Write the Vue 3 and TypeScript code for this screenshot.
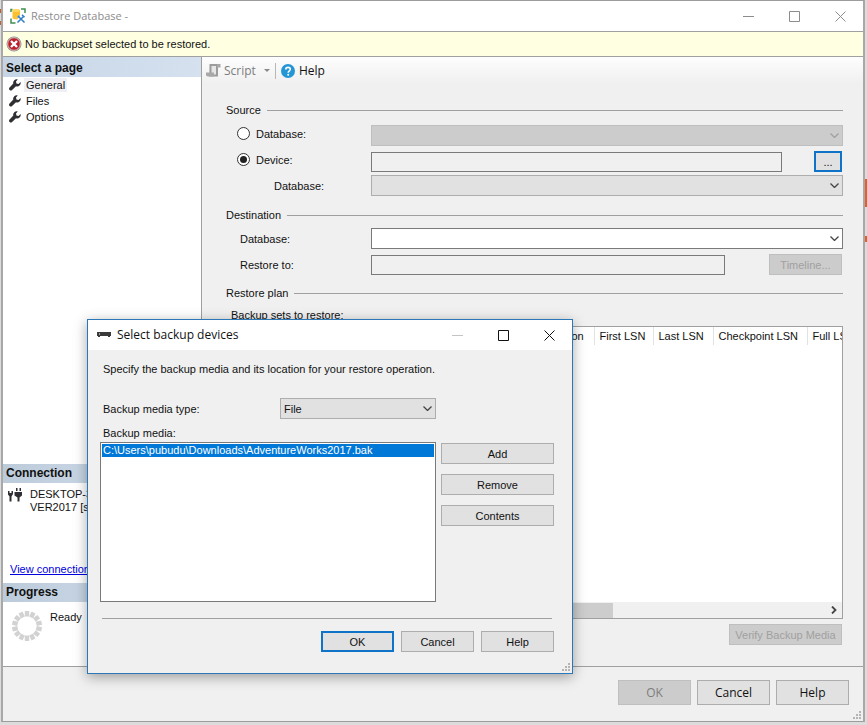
<script setup lang="ts">
import { ref } from 'vue'

const pages: string[] = ['General', 'Files', 'Options']
const currentPage = ref('General')

const source = ref<'database' | 'device'>('device')
const mediaType = ref('File')
const mediaFiles: string[] = ['C:\\Users\\pubudu\\Downloads\\AdventureWorks2017.bak']
const selectedMedia = ref(mediaFiles[0])

interface Column {
  title: string
  width: number
}

const columns: Column[] = [
  { title: 'Name', width: 95 },
  { title: 'Type', width: 68 },
  { title: 'Server', width: 72 },
  { title: 'Database', width: 72 },
  { title: 'Position', width: 55 },
  { title: 'First LSN', width: 59 },
  { title: 'Last LSN', width: 60 },
  { title: 'Checkpoint LSN', width: 94 },
  { title: 'Full LSN', width: 70 }
]

const spokes: number[] = Array.from({ length: 14 }, (_, i) => (i * 360) / 14)
const gripDots: [number, number][] = [[6, 0], [3, 3], [6, 3], [0, 6], [3, 6], [6, 6]]
</script>

<template>
  <div class="desktop">
    <main class="window">
      <header class="titlebar">
        <svg class="app-icon" viewBox="0 0 16 16" width="16" height="16" aria-hidden="true">
          <path d="M1 10.500v4.500h4.500M11 1h4v4M1 4V1.500h1.500" fill="none" stroke="#3f8f4f" stroke-width="1.500" />
          <path d="M2.500 2.500C2.500 .7 10 .7 10 2.500v7.500C10 11.700 2.500 11.700 2.500 10z" fill="#fbc02d" />
          <ellipse cx="6.250" cy="2.600" rx="3.700" ry="1.300" fill="#ffd966" />
          <path d="M7.500 14.500l6.500-6.500M8 8l6.500 6.500" stroke="#fff" stroke-width="3.400" />
          <path d="M7.500 14.500l6.500-6.500M8.500 8.500l6 6M12 6.800l2.500 2.500M7.500 9.500l2-2" fill="none" stroke="#2f7fc4" stroke-width="1.500" />
        </svg>
        <h1>Restore Database -</h1>
        <div class="caption">
          <button type="button" aria-label="Minimize">
            <svg viewBox="0 0 11 11" width="11" height="11"><path d="M0 5.500h11" /></svg>
          </button>
          <button type="button" aria-label="Maximize">
            <svg viewBox="0 0 11 11" width="11" height="11"><path d="M.5.5h10v10H.5z" /></svg>
          </button>
          <button type="button" aria-label="Close">
            <svg viewBox="0 0 11 11" width="11" height="11"><path d="M.5.5l10 10M10.500.5l-10 10" /></svg>
          </button>
        </div>
      </header>

      <div class="message" role="alert">
        <svg viewBox="0 0 16 16" width="16" height="16" aria-hidden="true">
          <circle cx="8" cy="8" r="7.500" fill="#8c8c8c" />
          <circle cx="8" cy="8" r="6.300" fill="#b9202c" stroke="#e8d8d8" stroke-width=".8" />
          <path d="M5 5l6 6M11 5l-6 6" stroke="#fff" stroke-width="2.400" />
        </svg>
        <span>No backupset selected to be restored.</span>
      </div>

      <div class="body">
        <aside class="sidebar">
          <h2 class="first">Select a page</h2>
          <nav>
            <a
              v-for="page in pages"
              :key="page"
              href="#"
              :class="{ current: page === currentPage }"
              @click.prevent="currentPage = page"
            >
              <svg viewBox="0 0 12 12" width="12" height="12" aria-hidden="true">
                <path
                  d="M8.800.4A3.500 3.500 0 0 0 4.300 4.600L.6 8.400c-.8.8-.7 1.800 0 2.500.7.7 1.700.7 2.500 0l3.900-3.700A3.500 3.500 0 0 0 11.600 3L9.500 5 7.400 4.500 7 2.400z"
                  fill="#2f2f33"
                />
              </svg>
              <span>{{ page }}</span>
            </a>
          </nav>
          <h2>Connection</h2>
          <div class="connection">
            <div class="server">
              <svg viewBox="0 0 15 15" width="15" height="15" aria-hidden="true">
                <path
                  d="M0 3h1.500v2h2V3H5v3L3.500 8.500v5h-2v-5L0 6.500zM6.500 4H14v3.500l-2.500 2v4h-2v-4L6.500 7.500zM8 0h1.500v3H8zM11.500 0H13v3h-1.500z"
                  fill="#2f2f33"
                />
              </svg>
              <p>DESKTOP-3<br />VER2017 [sa]</p>
            </div>
            <a href="#" @click.prevent>View connection properties</a>
          </div>
          <h2>Progress</h2>
          <div class="progress">
            <svg viewBox="0 0 32 32" width="32" height="32" aria-hidden="true">
              <rect
                v-for="angle in spokes"
                :key="angle"
                x="13.800"
                y="1"
                width="4.400"
                height="5.500"
                fill="#d2d2d2"
                :transform="`rotate(${angle} 16 16)`"
              />
            </svg>
            <span>Ready</span>
          </div>
        </aside>

        <div class="content">
          <div class="toolbar">
            <button type="button" class="script" disabled>
              <svg viewBox="0 0 15 15" width="15" height="15" aria-hidden="true">
                <path d="M4 1.500h8v11.500H2.500" fill="#e6e6e6" />
                <path d="M4.500 10V2h8.500M11 2v10.500H3" fill="none" stroke="#9c9c9c" stroke-width="2" />
                <path d="M0 9.500h8v4H2C.6 13.500 0 12.500 0 11.500z" fill="#a8a8a8" />
                <path d="M11 1h3.500v3.500H11z" fill="#a8a8a8" />
              </svg>
              <span>Script</span>
              <svg viewBox="0 0 6 3" width="6" height="3" aria-hidden="true"><path d="M0 0h6L3 3z" fill="#8a8a8a" /></svg>
            </button>
            <span class="divider"></span>
            <button type="button">
              <svg viewBox="0 0 14 14" width="14" height="14" aria-hidden="true">
                <circle cx="7" cy="7" r="7" fill="#2496d6" />
                <path d="M4.800 5.400C4.800 2.600 9.300 2.700 9.300 5.300 9.300 6.900 7.200 6.800 7.200 8.700" fill="none" stroke="#fff" stroke-width="1.600" />
                <circle cx="7.200" cy="10.800" r="1" fill="#fff" />
              </svg>
              <span>Help</span>
            </button>
          </div>

          <form class="form" @submit.prevent>
            <section class="group source">
              <h3>Source</h3>
              <div class="rows">
                <label class="pick"><input v-model="source" type="radio" value="database" name="source" />Database:</label>
                <div class="combo disabled">
                  <select disabled aria-label="Source database"></select>
                  <svg viewBox="0 0 9 5" width="9" height="5"><path d="M.5.5l4 4 4-4" /></svg>
                </div>
                <label class="pick"><input v-model="source" type="radio" value="device" name="source" />Device:</label>
                <div class="field device">
                  <input type="text" readonly aria-label="Device path" />
                  <button type="button" class="btn default browse" aria-label="Browse">...</button>
                </div>
                <label class="deep" for="device-db">Database:</label>
                <div class="combo">
                  <select id="device-db"></select>
                  <svg viewBox="0 0 9 5" width="9" height="5"><path d="M.5.5l4 4 4-4" /></svg>
                </div>
              </div>
            </section>

            <section class="group destination">
              <h3>Destination</h3>
              <div class="rows">
                <label class="name" for="dest-db">Database:</label>
                <div class="combo editable">
                  <select id="dest-db"></select>
                  <svg viewBox="0 0 9 5" width="9" height="5"><path d="M.5.5l4 4 4-4" /></svg>
                </div>
                <label class="name" for="restore-to">Restore to:</label>
                <div class="field restore">
                  <input id="restore-to" type="text" readonly />
                  <button type="button" class="btn" disabled>Timeline...</button>
                </div>
              </div>
            </section>

            <section class="group plan">
              <h3>Restore plan</h3>
              <div class="plan-body">
                <p>Backup sets to restore:</p>
                <div class="grid">
                  <div class="grid-view">
                    <table aria-label="Backup sets to restore">
                      <colgroup>
                        <col v-for="column in columns" :key="column.title" :style="{ width: column.width + 'px' }" />
                      </colgroup>
                      <thead>
                        <tr>
                          <th v-for="column in columns" :key="column.title" scope="col">{{ column.title }}</th>
                        </tr>
                      </thead>
                    </table>
                  </div>
                  <div class="scrollbar">
                    <span class="thumb"></span>
                    <svg viewBox="0 0 6 8" width="6" height="8"><path d="M1 .5L4.500 4 1 7.500" /></svg>
                  </div>
                </div>
                <button type="button" class="btn verify" disabled>Verify Backup Media</button>
              </div>
            </section>
          </form>
        </div>
      </div>

      <footer class="actions">
        <button type="button" class="btn" disabled>OK</button>
        <button type="button" class="btn">Cancel</button>
        <button type="button" class="btn">Help</button>
        <svg class="grip" viewBox="0 0 8 8" width="8" height="8" aria-hidden="true">
          <rect v-for="dot in gripDots" :key="dot.join()" :x="dot[0]" :y="dot[1]" width="2" height="2" />
        </svg>
      </footer>
    </main>

    <div class="dialog" role="dialog" aria-labelledby="dialog-title">
      <header class="titlebar">
        <svg class="drive" viewBox="0 0 14 6" width="14" height="6" aria-hidden="true">
          <path d="M0 0h14v4h-1v1h-2V4H3v1H1V4H0z" fill="#3a3a3a" />
          <path d="M2 1.500h1v1H2z" fill="#fff" />
        </svg>
        <h1 id="dialog-title">Select backup devices</h1>
        <div class="caption">
          <button type="button" aria-label="Minimize" disabled>
            <svg viewBox="0 0 11 11" width="11" height="11"><path d="M0 5.500h11" /></svg>
          </button>
          <button type="button" aria-label="Maximize">
            <svg viewBox="0 0 11 11" width="11" height="11"><path d="M.5.5h10v10H.5z" /></svg>
          </button>
          <button type="button" aria-label="Close">
            <svg viewBox="0 0 11 11" width="11" height="11"><path d="M.5.5l10 10M10.500.5l-10 10" /></svg>
          </button>
        </div>
      </header>
      <form class="dialog-body" @submit.prevent>
        <p class="intro">Specify the backup media and its location for your restore operation.</p>
        <div class="media-type">
          <label for="media-type">Backup media type:</label>
          <div class="combo">
            <select id="media-type" v-model="mediaType">
              <option>File</option>
              <option>URL</option>
            </select>
            <svg viewBox="0 0 9 5" width="9" height="5"><path d="M.5.5l4 4 4-4" /></svg>
          </div>
        </div>
        <label class="media-label" for="media-list">Backup media:</label>
        <div class="media">
          <select id="media-list" v-model="selectedMedia" size="4">
            <option v-for="file in mediaFiles" :key="file" :value="file">{{ file }}</option>
          </select>
          <div class="media-buttons">
            <button type="button" class="btn">Add</button>
            <button type="button" class="btn">Remove</button>
            <button type="button" class="btn">Contents</button>
          </div>
        </div>
        <hr />
        <div class="dialog-actions">
          <button type="button" class="btn default">OK</button>
          <button type="button" class="btn">Cancel</button>
          <button type="button" class="btn">Help</button>
        </div>
      </form>
      <svg class="grip" viewBox="0 0 8 8" width="8" height="8" aria-hidden="true">
        <rect v-for="dot in gripDots" :key="dot.join()" :x="dot[0]" :y="dot[1]" width="2" height="2" />
      </svg>
    </div>
  </div>
</template>

<style>
body {
  background: #dcdcdc;
}
</style>

<style scoped>
* {
  box-sizing: border-box;
  margin: 0;
  padding: 0;
}

.desktop {
  position: relative;
  display: flex;
  min-height: 100vh;
  padding: 0 2px 3px 1px;
  background:
    linear-gradient(#e0602c, #e0602c) right 179px / 3px 28px no-repeat,
    linear-gradient(#e0602c, #e0602c) right 236px / 3px 6px no-repeat,
    linear-gradient(#c06030, #c06030) left 9px / 1px 4px no-repeat,
    linear-gradient(#c06030, #c06030) left 21px / 1px 4px no-repeat,
    #dcdcdc;
  color: #111;
  font: 11px/14px "Liberation Sans", Arial, sans-serif;
}

button,
input,
select {
  font: inherit;
  color: inherit;
}

.window {
  flex: 1;
  display: flex;
  flex-direction: column;
  min-width: 0;
  border: 1px solid #9c9c9c;
  border-width: 1px 2px 1px 2px;
  border-color: #9c9c9c #a8a8a8;
  background: #f0f0f0;
}

.titlebar {
  display: flex;
  align-items: center;
  height: 30px;
  background: #fff;
}

.titlebar h1 {
  flex: 1;
  font: 12px/16px "Open Sans", "Noto Sans", sans-serif;
}

.window > .titlebar {
  gap: 5px;
  padding-left: 7px;
  color: #8c8c8c;
}

.window > .titlebar h1 {
  font-size: 11px;
}

.caption {
  display: flex;
}

.caption button {
  display: flex;
  align-items: center;
  justify-content: center;
  width: 46px;
  height: 30px;
  border: 0;
  background: none;
}

.caption path {
  fill: none;
  stroke: currentColor;
}

.caption button:disabled {
  color: #c4c4c4;
}

.message {
  display: flex;
  align-items: center;
  gap: 3px;
  height: 26px;
  padding-left: 3px;
  border: solid #a0a0a0;
  border-width: 1px 0;
  background: #ffffe1;
}

.body {
  flex: 1;
  display: flex;
  min-height: 0;
}

.sidebar {
  display: flex;
  flex-direction: column;
  width: 199px;
  border-right: 1px solid #a0a0a0;
  background: #fff;
}

.sidebar h2 {
  height: 19px;
  padding-left: 3px;
  background: linear-gradient(90deg, #bccbda, #d5e1ef);
  font: bold 12px/19px "Liberation Sans", Arial, sans-serif;
}

.sidebar .first {
  height: 20px;
  background: linear-gradient(90deg, #c6d5e6, #d5e1ef);
  line-height: 22px;
}

nav {
  flex: 1;
}

nav a {
  display: flex;
  align-items: center;
  gap: 3px;
  height: 16px;
  padding-left: 6px;
  color: inherit;
  text-decoration: none;
}

nav span {
  padding: 0 2px;
}

nav .current span {
  background: #f0f0f4;
}

.connection {
  display: flex;
  flex-direction: column;
  justify-content: space-between;
  height: 100px;
  padding: 5px 7px 7px 5px;
  overflow: hidden;
  white-space: nowrap;
}

.server {
  display: flex;
  gap: 7px;
  line-height: 13px;
}

.connection a {
  padding-left: 2px;
  color: #0000e0;
}

.progress {
  display: flex;
  gap: 7px;
  height: 64px;
  padding: 8px 8px 0;
}

.content {
  flex: 1;
  display: flex;
  flex-direction: column;
  min-width: 0;
}

.toolbar {
  display: flex;
  align-items: center;
  height: 27px;
  padding-left: 4px;
  background: linear-gradient(#fdfdfd, #f0f0f0);
  font: 12px/16px "Open Sans", "Noto Sans", sans-serif;
}

.toolbar button {
  display: flex;
  align-items: center;
  gap: 4px;
  border: 0;
  background: none;
}

.toolbar .script {
  gap: 3px;
  color: #7c7c7c;
}

.toolbar .script span {
  margin-right: 5px;
}

.divider {
  height: 16px;
  margin: 0 5px;
  border-left: 1px solid #b8b8b8;
}

.form {
  flex: 1;
  display: flex;
  flex-direction: column;
  padding: 18px 20px 21px 24px;
}

.group {
  display: flex;
  flex-direction: column;
  gap: 5px;
}

.source {
  gap: 7px;
}

.destination {
  margin-top: 11px;
}

.plan {
  flex: 1;
  gap: 7px;
  margin-top: 10px;
}

.group h3 {
  display: flex;
  align-items: center;
  gap: 6px;
  font: inherit;
  line-height: 16px;
}

.group h3::after {
  content: "";
  flex: 1;
  height: 1px;
  background: #a0a0a0;
}

.rows {
  display: grid;
  grid-template-columns: 145px 1fr;
  grid-template-rows: 26px 24px 21px;
}

.destination .rows {
  grid-template-rows: 26px 21px;
}

.pick {
  display: flex;
  align-items: center;
  gap: 6px;
  height: 17px;
  padding-left: 11px;
}

.pick input {
  display: grid;
  place-items: center;
  width: 13px;
  height: 13px;
  border: 1px solid #333;
  border-radius: 50%;
  background: #fff;
  appearance: none;
}

.pick input:checked::after {
  content: "";
  width: 7px;
  height: 7px;
  border-radius: 50%;
  background: #222;
}

.deep,
.name {
  line-height: 22px;
}

.deep {
  padding-left: 48px;
}

.name {
  padding-left: 14px;
}

.combo {
  display: grid;
  align-items: center;
  height: 21px;
}

.combo select,
.combo svg {
  grid-area: 1 / 1;
}

.combo select {
  width: 100%;
  height: 21px;
  padding: 0 3px;
  border: 1px solid #adadad;
  border-radius: 0;
  background: #e1e1e1;
  appearance: none;
}

.combo svg {
  justify-self: end;
  margin-right: 4px;
  fill: none;
  stroke: #444;
  pointer-events: none;
}

.combo path {
  stroke-width: 1.3;
}

.combo.disabled select {
  border-color: #bfbfbf;
  background: #ccc;
  opacity: 1;
}

.combo.disabled svg {
  stroke: #a0a0a0;
}

.combo.editable select {
  border-color: #7a7a7a;
  background: #fff;
}

.field {
  display: flex;
  align-items: flex-end;
  height: 21px;
  padding-right: 1px;
}

.field input {
  flex: 1;
  min-width: 0;
  height: 20px;
  padding: 0 3px;
  border: 1px solid #7a7a7a;
  background: #f0f0f0;
}

.device {
  gap: 32px;
}

.restore {
  gap: 44px;
}

.btn {
  width: 73px;
  height: 21px;
  border: 1px solid #adadad;
  border-radius: 0;
  background: #e1e1e1;
}

.btn.default {
  border: 2px solid #0f73c8;
}

.btn:disabled {
  border-color: #bfbfbf;
  background: #ccc;
  color: #a0a0a0;
}

.btn.browse {
  width: 28px;
}

.plan-body {
  flex: 1;
  display: flex;
  flex-direction: column;
  padding-left: 5px;
}

.grid {
  flex: 1;
  display: flex;
  flex-direction: column;
  min-width: 0;
  margin: 4px 0 5px;
  border: 1px solid #a0a0a0;
  background: #fff;
}

.grid-view {
  flex: 1;
  width: 100%;
  overflow: hidden;
  contain: inline-size;
}

table {
  width: 645px;
  border-collapse: collapse;
  table-layout: fixed;
}

th {
  height: 18px;
  padding: 0 0 0 5px;
  border-right: 1px solid #e2e2e2;
  font-weight: normal;
  text-align: left;
  white-space: nowrap;
}

.scrollbar {
  display: flex;
  align-items: center;
  justify-content: space-between;
  height: 16px;
  padding: 0 5px 0 16px;
  background: #f0f0f0;
}

.thumb {
  width: 62%;
  height: 15px;
  background: #cdcdcd;
}

.scrollbar svg {
  fill: none;
  stroke: #444;
}

.scrollbar path {
  stroke-width: 1.8;
}

.verify {
  align-self: flex-end;
  width: 113px;
  margin-right: 1px;
}

.actions {
  position: relative;
  display: flex;
  justify-content: flex-end;
  gap: 6px;
  height: 55px;
  padding: 13px 14px 0 0;
  border-top: 1px solid #a0a0a0;
}

.actions .btn {
  height: 25px;
  font: 12px/16px "Open Sans", "Noto Sans", sans-serif;
}

.actions .btn:disabled {
  color: #7c7c7c;
}

.grip {
  position: absolute;
  right: 2px;
  bottom: 2px;
  fill: #b4b4b4;
}

.dialog {
  position: absolute;
  left: 87px;
  top: 319px;
  width: 486px;
  border: 1px solid #2a78b8;
  background: #f0f0f0;
  box-shadow: 0 3px 12px rgba(0, 0, 0, 0.35);
}

.dialog .titlebar {
  gap: 6px;
  padding-left: 9px;
  color: #111;
}

.dialog-body {
  padding: 12px 18px 21px 12px;
}

.intro {
  padding-left: 3px;
}

.media-type {
  display: flex;
  align-items: center;
  padding: 22px 0 0 3px;
}

.media-type label {
  flex: 1;
}

.media-type .combo {
  width: 156px;
  margin-right: 118px;
}

.media-label {
  display: block;
  padding: 7px 0 2px 3px;
}

.media {
  display: flex;
  gap: 5px;
}

.media select {
  flex: 1;
  min-width: 0;
  height: 160px;
  padding: 1px;
  border: 1px solid #7a7a7a;
  border-radius: 0;
  background: #fff;
  overflow: hidden;
  appearance: none;
}

.media option {
  min-height: 13px;
  padding: 0 1px;
  line-height: 13px;
}

.media option:checked {
  background: linear-gradient(#0078d7, #0078d7);
  -webkit-text-fill-color: #fff;
}

.media-buttons {
  display: flex;
  flex-direction: column;
  gap: 10px;
  padding-top: 1px;
}

.media-buttons .btn {
  width: 113px;
}

hr {
  height: 1px;
  margin: 16px 2px 12px;
  border: 0;
  background: #a0a0a0;
}

.dialog-actions {
  display: flex;
  justify-content: flex-end;
  gap: 7px;
}
</style>
